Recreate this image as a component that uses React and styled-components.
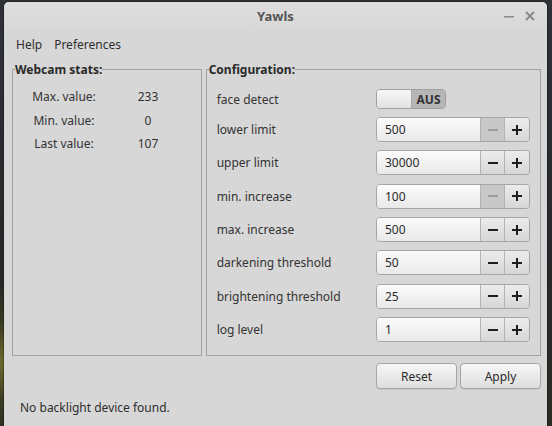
import React from "react";
import styled, { createGlobalStyle } from "styled-components";

const GlobalStyle = createGlobalStyle`
  html, body {
    margin: 0;
    padding: 0;
  }
  body {
    font-family: "Noto Sans", "DejaVu Sans", sans-serif;
    font-size: 12px;
    color: #333333;
  }
`;

const Desktop = styled.div`
  width: 552px;
  height: 426px;
  overflow: hidden;
  box-sizing: border-box;
  padding: 2px 5px 0 4px;
  background: radial-gradient(circle at 0% 85%, #6b6a2e 0, #3a3a22 6%, transparent 12%),
    linear-gradient(180deg, #2e3236 0%, #26282b 60%, #2c2a24 100%);
`;

const Window = styled.div`
  height: 440px;
  display: flex;
  flex-direction: column;
  background: #d7d7d7;
  border-radius: 5px 5px 0 0;
  box-shadow: 0 0 0 1px rgba(0, 0, 0, 0.25);
`;

const TitleBar = styled.div`
  height: 26px;
  display: grid;
  grid-template-columns: 1fr auto 1fr;
  align-items: center;
  background: linear-gradient(180deg, #dedede, #d8d8d8);
  border-radius: 5px 5px 0 0;
`;

const Title = styled.div`
  font-size: 13px;
  font-weight: bold;
  color: #555555;
  padding-top: 2px;
`;

const Controls = styled.div`
  display: flex;
  justify-content: flex-end;
  align-items: center;
  gap: 11px;
  padding-right: 12px;
  padding-top: 2px;
`;

const MenuBar = styled.div`
  height: 32px;
  display: flex;
  align-items: center;
  gap: 12px;
  padding-left: 12px;
`;

const MenuItem = styled.span`
  color: #2e2e2e;
`;

const Body = styled.div`
  display: flex;
  gap: 4px;
  padding: 1px 6px 0 8px;
  height: 295px;
`;

const Group = styled.fieldset`
  margin: 0;
  min-width: 0;
  border: 1px solid #a3a3a3;
  padding: 7px 0 0 0;
  width: ${(p) => p.$width}px;
  box-sizing: border-box;
`;

const Legend = styled.legend`
  font-weight: bold;
  color: #2a2a2a;
  padding: 0;
  margin-left: 2px;
  line-height: 17px;
`;

const StatsGrid = styled.div`
  display: grid;
  grid-template-columns: 88px 80px;
  grid-auto-rows: 23.5px;
  align-items: center;
  padding-left: 7px;
`;

const StatCell = styled.div`
  text-align: center;
  color: #333333;
`;

const ConfigGrid = styled.div`
  display: grid;
  grid-template-columns: 1fr 154px;
  grid-template-rows: 28px;
  grid-auto-rows: 33.33px;
  align-items: center;
  padding: 0 10px 0 10px;
`;

const Label = styled.div`
  color: #333333;
`;

const Toggle = styled.div`
  width: 70px;
  height: 20px;
  box-sizing: border-box;
  display: flex;
  border: 1px solid #a0a0a0;
  border-radius: 4px;
  overflow: hidden;
`;

const ToggleKnob = styled.div`
  width: 34px;
  background: linear-gradient(180deg, #f7f7f7, #e2e2e2);
  border-right: 1px solid #a8a8a8;
`;

const ToggleState = styled.div`
  flex: 1;
  display: flex;
  align-items: center;
  justify-content: center;
  background: #b6b6b6;
  font-weight: bold;
  color: #333333;
`;

const Spin = styled.div`
  height: 25px;
  box-sizing: border-box;
  display: flex;
  border: 1px solid #a6a6a6;
  border-radius: 4px;
  overflow: hidden;
`;

const SpinField = styled.div`
  flex: 1;
  display: flex;
  align-items: center;
  padding-left: 8px;
  background: linear-gradient(180deg, #fbfbfb, #e9e9e9);
  color: #2a2a2a;
`;

const SpinButton = styled.div`
  width: ${(p) => p.$width}px;
  display: flex;
  align-items: center;
  justify-content: center;
  border-left: 1px solid #b3b3b3;
  background: ${(p) =>
    p.$disabled ? "#c8c8c8" : "linear-gradient(180deg, #ececec, #d6d6d6)"};
  color: ${(p) => (p.$disabled ? "#9c9c9c" : "#1e1e1e")};
`;

const ButtonRow = styled.div`
  display: flex;
  justify-content: flex-end;
  gap: 3px;
  padding: 7px 6px 0 0;
`;

const Button = styled.div`
  width: 81px;
  height: 26px;
  box-sizing: border-box;
  display: flex;
  align-items: center;
  justify-content: center;
  border: 1px solid #a6a6a6;
  border-radius: 4px;
  background: linear-gradient(180deg, #f6f6f6, #dedede);
  box-shadow: 0 1px 0 rgba(0, 0, 0, 0.08);
  color: #2a2a2a;
`;

const Status = styled.div`
  padding: 10px 0 0 16px;
  line-height: 17px;
  color: #2e2e2e;
`;

const Minus = () => (
  <svg width="10" height="10" viewBox="0 0 10 10">
    <rect x="0" y="4" width="10" height="2" fill="currentColor" />
  </svg>
);

const Plus = () => (
  <svg width="10" height="10" viewBox="0 0 10 10">
    <rect x="0" y="4" width="10" height="2" fill="currentColor" />
    <rect x="4" y="0" width="2" height="10" fill="currentColor" />
  </svg>
);

const stats = [
  { label: "Max. value:", value: "233" },
  { label: "Min. value:", value: "0" },
  { label: "Last value:", value: "107" },
];

const settings = [
  { label: "lower limit", value: "500", minDisabled: true },
  { label: "upper limit", value: "30000" },
  { label: "min. increase", value: "100", minDisabled: true },
  { label: "max. increase", value: "500" },
  { label: "darkening threshold", value: "50" },
  { label: "brightening threshold", value: "25" },
  { label: "log level", value: "1" },
];

export default function App() {
  return (
    <>
      <GlobalStyle />
      <Desktop>
        <Window>
          <TitleBar>
            <span />
            <Title>Yawls</Title>
            <Controls>
              <svg width="10" height="10" viewBox="0 0 10 10">
                <rect x="0" y="5" width="10" height="1.5" fill="#8a8a8a" />
              </svg>
              <svg width="10" height="10" viewBox="0 0 10 10">
                <path d="M1 1 L9 9 M9 1 L1 9" stroke="#8a8a8a" strokeWidth="2" />
              </svg>
            </Controls>
          </TitleBar>
          <MenuBar>
            <MenuItem>Help</MenuItem>
            <MenuItem>Preferences</MenuItem>
          </MenuBar>
          <Body>
            <Group $width={190}>
              <Legend>Webcam stats:</Legend>
              <StatsGrid>
                {stats.map((s) => (
                  <React.Fragment key={s.label}>
                    <StatCell>{s.label}</StatCell>
                    <StatCell>{s.value}</StatCell>
                  </React.Fragment>
                ))}
              </StatsGrid>
            </Group>
            <Group $width={336}>
              <Legend>Configuration:</Legend>
              <ConfigGrid>
                <Label>face detect</Label>
                <Toggle>
                  <ToggleKnob />
                  <ToggleState>AUS</ToggleState>
                </Toggle>
                {settings.map((s) => (
                  <React.Fragment key={s.label}>
                    <Label>{s.label}</Label>
                    <Spin>
                      <SpinField>{s.value}</SpinField>
                      <SpinButton $width={23} $disabled={s.minDisabled}>
                        <Minus />
                      </SpinButton>
                      <SpinButton $width={24}>
                        <Plus />
                      </SpinButton>
                    </Spin>
                  </React.Fragment>
                ))}
              </ConfigGrid>
            </Group>
          </Body>
          <ButtonRow>
            <Button>Reset</Button>
            <Button>Apply</Button>
          </ButtonRow>
          <Status>No backlight device found.</Status>
        </Window>
      </Desktop>
    </>
  );
}
